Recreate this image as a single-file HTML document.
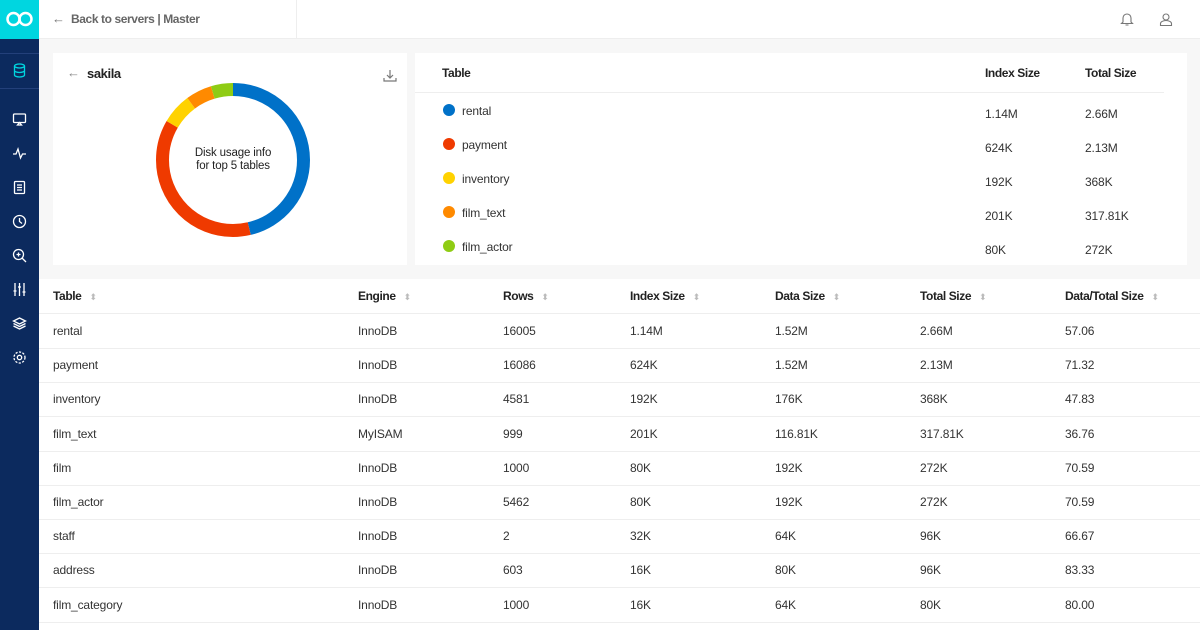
<!DOCTYPE html>
<html><head><style>
*{margin:0;padding:0;box-sizing:border-box}
body{width:1200px;height:630px;overflow:hidden;background:#f7f7f7;font-family:"Liberation Sans",sans-serif;color:#333;font-size:12px;position:relative;letter-spacing:-0.15px}
.sb{position:absolute;left:0;top:0;width:39px;height:630px;background:#0c2a5e}
.logo{position:absolute;left:0;top:0;width:39px;height:39px;background:#00d6e0}
.hdr{position:absolute;left:39px;top:0;right:0;height:39px;background:#fff;border-bottom:1px solid #eee}
.abs{position:absolute}
.card{position:absolute;background:#fff}
.ic{position:absolute;left:12px;width:15px;height:15px}
.t{position:absolute;white-space:nowrap}
.b{font-weight:bold;color:#222;letter-spacing:-0.4px}
.line{position:absolute;height:1px;background:#eee}
.dot{position:absolute;width:12px;height:12px;border-radius:50%}
.s{color:#bbb;font-size:9px;margin-left:8px;font-weight:normal}
</style></head><body>
<div class="sb">
<div class="logo"><svg width="39" height="39" viewBox="0 0 39 39"><circle cx="13.5" cy="19" r="6" fill="none" stroke="#fff" stroke-width="2.5"/><circle cx="25.5" cy="19" r="6" fill="none" stroke="#fff" stroke-width="2.5"/></svg></div>
<div class="abs" style="left:0;top:53px;width:39px;height:1px;background:#23407a"></div>
<div class="abs" style="left:0;top:88px;width:39px;height:1px;background:#23407a"></div>
<svg class="ic" style="top:63px" viewBox="0 0 15 15" fill="none" stroke="#00d6e0" stroke-width="1.3"><ellipse cx="7.5" cy="3" rx="5" ry="2"/><path d="M2.5 3v9c0 1.1 2.2 2 5 2s5-.9 5-2V3M2.5 7.5c0 1.1 2.2 2 5 2s5-.9 5-2"/></svg>
<svg class="ic" style="top:112px" viewBox="0 0 15 15" fill="none" stroke="#fff" stroke-width="1.3"><rect x="1.5" y="2" width="12" height="8.5" rx="1"/><path d="M5.5 13h4l-2-2.5z"/></svg>
<svg class="ic" style="top:146px" viewBox="0 0 15 15" fill="none" stroke="#fff" stroke-width="1.3"><path d="M1 8h3l2-5 2.5 9 2-4h3.5"/></svg>
<svg class="ic" style="top:180px" viewBox="0 0 15 15" fill="none" stroke="#fff" stroke-width="1.3"><rect x="2.5" y="1.5" width="10" height="12" rx="1"/><path d="M5 5h5M5 7.5h5M5 10h5"/></svg>
<svg class="ic" style="top:214px" viewBox="0 0 15 15" fill="none" stroke="#fff" stroke-width="1.3"><circle cx="7.5" cy="7.5" r="6"/><path d="M7.5 4v3.5l2.5 2"/></svg>
<svg class="ic" style="top:248px" viewBox="0 0 15 15" fill="none" stroke="#fff" stroke-width="1.3"><circle cx="6.5" cy="6.5" r="5"/><path d="M10 10l4 4M4.5 6.5h4M6.5 4.5v4"/></svg>
<svg class="ic" style="top:282px" viewBox="0 0 15 15" fill="none" stroke="#fff" stroke-width="1.3"><path d="M3 1v13M7.5 1v13M12 1v13M1.5 9h3M6 5h3M10.5 10h3"/></svg>
<svg class="ic" style="top:316px" viewBox="0 0 15 15" fill="none" stroke="#fff" stroke-width="1.3"><path d="M7.5 2l6 3-6 3-6-3zM1.5 7.5l6 3 6-3M1.5 10l6 3 6-3"/></svg>
<svg class="ic" style="top:350px" viewBox="0 0 15 15" fill="none" stroke="#fff" stroke-width="1.3"><circle cx="7.5" cy="7.5" r="2.2"/><circle cx="7.5" cy="7.5" r="5.5" stroke-dasharray="2.2 1.4"/></svg>
</div>
<div class="hdr">
<div class="t" style="left:13px;top:11px;color:#777;font-size:13px">←</div>
<div class="t" style="left:32px;top:12px;color:#666;font-size:12px;font-weight:bold;letter-spacing:-0.4px">Back to servers | Master</div>
<div class="abs" style="left:257px;top:0;width:1px;height:39px;background:#eee"></div>
<svg class="abs" style="left:1081px;top:12px" width="14" height="15" viewBox="0 0 14 15" fill="none" stroke="#777" stroke-width="1.1"><path d="M3 10V6a4 4 0 018 0v4l1.5 1.5h-11zM5.5 13h3"/></svg>
<svg class="abs" style="left:1120px;top:12px" width="14" height="15" viewBox="0 0 14 15" fill="none" stroke="#777" stroke-width="1.1"><circle cx="7" cy="5" r="3"/><path d="M1.5 13.5v-2c0-1.5 2.5-3 5.5-3s5.5 1.5 5.5 3v2z"/></svg>
</div>
<div class="card" style="left:53px;top:53px;width:354px;height:212px">
<div class="t" style="left:14px;top:12px;color:#888;font-size:13px">←</div>
<div class="t b" style="left:34px;top:13px;font-size:13px">sakila</div>
<svg class="abs" style="left:330px;top:16px" width="14" height="14" viewBox="0 0 14 14" fill="none" stroke="#777" stroke-width="1.2"><path d="M7 1v8M4 6l3 3 3-3M1 9v3h12V9"/></svg>
<svg class="abs" style="left:100px;top:27px" width="160" height="160" viewBox="0 0 160 160">
<g transform="rotate(-90 80 80)" fill="none" stroke-width="13">
<circle cx="80" cy="80" r="70.5" stroke="#0071c8" stroke-dasharray="205 443"/>
<circle cx="80" cy="80" r="70.5" stroke="#ef3a00" stroke-dasharray="0 205 164.5 443"/>
<circle cx="80" cy="80" r="70.5" stroke="#ffd200" stroke-dasharray="0 369.5 28.5 443"/>
<circle cx="80" cy="80" r="70.5" stroke="#ff8a00" stroke-dasharray="0 398 24.3 443"/>
<circle cx="80" cy="80" r="70.5" stroke="#8fcc14" stroke-dasharray="0 422.3 20.7 443"/>
</g></svg>
<div class="t" style="left:0;width:360px;text-align:center;top:94px;font-size:11.5px;line-height:13px;color:#222">Disk usage info<br>for top 5 tables</div>
</div>
<div class="card" style="left:415px;top:53px;width:772px;height:212px">
<div class="t b" style="left:27px;top:13px">Table</div>
<div class="t b" style="left:570px;top:13px">Index Size</div>
<div class="t b" style="left:670px;top:13px">Total Size</div>
<div class="line" style="left:0;top:39px;width:749px"></div>
<div class="dot" style="left:28px;top:51px;background:#0071c8"></div><div class="t" style="left:47px;top:51px">rental</div><div class="t" style="left:570px;top:54px">1.14M</div><div class="t" style="left:670px;top:54px">2.66M</div>
<div class="dot" style="left:28px;top:85px;background:#ef3a00"></div><div class="t" style="left:47px;top:85px">payment</div><div class="t" style="left:570px;top:88px">624K</div><div class="t" style="left:670px;top:88px">2.13M</div>
<div class="dot" style="left:28px;top:119px;background:#ffd200"></div><div class="t" style="left:47px;top:119px">inventory</div><div class="t" style="left:570px;top:122px">192K</div><div class="t" style="left:670px;top:122px">368K</div>
<div class="dot" style="left:28px;top:153px;background:#ff8a00"></div><div class="t" style="left:47px;top:153px">film_text</div><div class="t" style="left:570px;top:156px">201K</div><div class="t" style="left:670px;top:156px">317.81K</div>
<div class="dot" style="left:28px;top:187px;background:#8fcc14"></div><div class="t" style="left:47px;top:187px">film_actor</div><div class="t" style="left:570px;top:190px">80K</div><div class="t" style="left:670px;top:190px">272K</div>
</div>
<div class="card" style="left:39px;top:279px;width:1161px;height:351px"></div>
<div class="abs" style="left:39px;top:279px;width:1161px">
<div class="t b" style="left:14px;top:10px">Table<span class="s">⬍</span></div>
<div class="t b" style="left:319px;top:10px">Engine<span class="s">⬍</span></div>
<div class="t b" style="left:464px;top:10px">Rows<span class="s">⬍</span></div>
<div class="t b" style="left:591px;top:10px">Index Size<span class="s">⬍</span></div>
<div class="t b" style="left:736px;top:10px">Data Size<span class="s">⬍</span></div>
<div class="t b" style="left:881px;top:10px">Total Size<span class="s">⬍</span></div>
<div class="t b" style="left:1026px;top:10px">Data/Total Size<span class="s">⬍</span></div>
<div class="line" style="left:0;top:34px;width:1161px"></div>
</div>
<div id="rows"></div>
<script>
var d=[["rental","InnoDB","16005","1.14M","1.52M","2.66M","57.06"],["payment","InnoDB","16086","624K","1.52M","2.13M","71.32"],["inventory","InnoDB","4581","192K","176K","368K","47.83"],["film_text","MyISAM","999","201K","116.81K","317.81K","36.76"],["film","InnoDB","1000","80K","192K","272K","70.59"],["film_actor","InnoDB","5462","80K","192K","272K","70.59"],["staff","InnoDB","2","32K","64K","96K","66.67"],["address","InnoDB","603","16K","80K","96K","83.33"],["film_category","InnoDB","1000","16K","64K","80K","80.00"]];
var xs=[53,358,503,630,775,920,1065],h="";
d.forEach(function(r,i){var y=324+i*34.2;r.forEach(function(c,j){h+='<div class="t" style="left:'+xs[j]+'px;top:'+y+'px">'+c+'</div>'});h+='<div class="line" style="left:39px;width:1161px;top:'+(y+24)+'px"></div>'});
document.getElementById("rows").innerHTML=h;
</script>
</body></html>
